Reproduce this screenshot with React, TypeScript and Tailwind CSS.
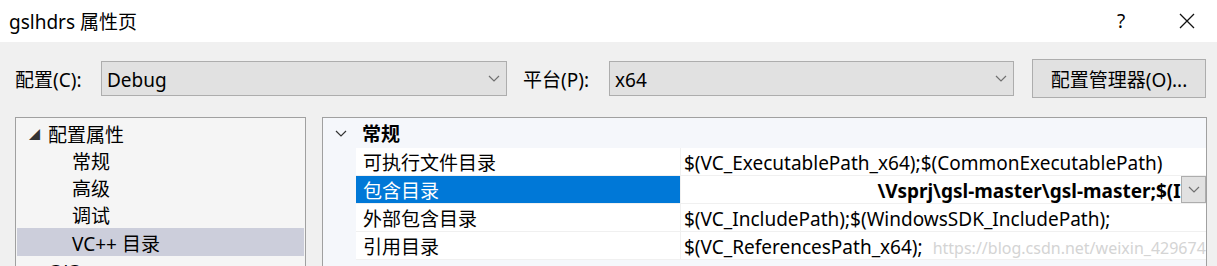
const font = { fontFamily: '"Noto Sans", "Noto Sans CJK SC", sans-serif' };

const Chevron = ({ className = "" }: { className?: string }) => (
  <svg width="12" height="7" viewBox="0 0 12 7" className={className}>
    <path d="M1 1l5 5 5-5" fill="none" stroke="currentColor" strokeWidth="1.2" />
  </svg>
);

const Combo = ({ value, width }: { value: string; width: string }) => (
  <div className={`${width} h-[35px] bg-[#e1e1e1] border border-[#adadad] flex items-center justify-between pl-[5px] pr-[6px]`}>
    <span className="text-[19px] text-black pt-[3px]">{value}</span>
    <Chevron className="text-[#707070]" />
  </div>
);

const rows = [
  { name: "可执行文件目录", value: "$(VC_ExecutablePath_x64);$(CommonExecutablePath)" },
  { name: "包含目录", value: "", selected: true },
  { name: "外部包含目录", value: "$(VC_IncludePath);$(WindowsSDK_IncludePath);" },
  { name: "引用目录", value: "$(VC_ReferencesPath_x64);", mark: true },
];

export default function App() {
  return (
    <div className="w-[1217px] h-[266px] overflow-hidden bg-[#f0f0f0] text-black" style={font}>
      <div className="h-[42px] bg-white flex items-center justify-between pl-[9px]">
        <span className="text-[19px] pt-[2px]">gslhdrs 属性页</span>
        <div className="flex items-center">
          <span className="text-[19px] w-[30px] text-center mr-[43px]">?</span>
          <svg width="16" height="16" viewBox="0 0 16 16" className="mr-[22px]">
            <path d="M1 1l14 14M15 1L1 15" stroke="#111" strokeWidth="1.3" />
          </svg>
        </div>
      </div>

      <div className="flex items-center h-[39px] mt-[17px] pl-[15px]">
        <span className="text-[19px] w-[86px] pt-[3px]">配置(C):</span>
        <Combo value="Debug" width="w-[406px]" />
        <span className="text-[19px] ml-[16px] w-[86px] pt-[3px]">平台(P):</span>
        <Combo value="x64" width="w-[405px]" />
        <div className="ml-[18px] w-[174px] h-[39px] bg-[#e1e1e1] border border-[#adadad] flex items-center justify-center text-[19px] pt-[3px]">
          配置管理器(O)...
        </div>
      </div>

      <div className="flex mt-[19px] pl-[15px] gap-[16px]">
        <div className="w-[291px] h-[160px] bg-[#f5f5f5] border border-[#a0a0a0] pt-[2px] px-[1px] text-[19px]">
          <div className="h-[27px] flex items-center pt-[4px]">
            <span className="w-[31px] pl-[12px] text-[11px] text-[#333]">◢</span>
            <span>配置属性</span>
          </div>
          {["常规", "高级", "调试"].map((t) => (
            <div key={t} className="h-[27px] flex items-center pl-[55px] pt-[4px]">{t}</div>
          ))}
          <div className="h-[28px] flex items-center pl-[55px] pt-[4px] bg-[#cccedb]">VC++ 目录</div>
          <div className="h-[27px] flex items-center pt-[6px]">
            <span className="w-[31px] pl-[12px] text-[11px] text-[#333]">▷</span>
            <span>C/C++</span>
          </div>
        </div>

        <div className="w-[885px] h-[160px] bg-[#f5f7fb] border border-[#a0a0a0] text-[19px] overflow-hidden">
          <div className="h-[30px] flex items-center">
            <span className="w-[33px] flex justify-center pl-[2px]">
              <Chevron className="text-[#333]" />
            </span>
            <span className="font-bold pt-[3px] pl-[6px]">常规</span>
          </div>
          {rows.map((r) => (
            <div key={r.name} className="h-[28px] flex ml-[33px] border-b border-[#f0f0f0]">
              <div
                className={`w-[325px] flex items-center pl-[7px] pt-[4px] border-r border-[#f0f0f0] ${
                  r.selected ? "bg-[#0078d7] text-white" : "bg-white"
                }`}
              >
                {r.name}
              </div>
              <div className="flex-1 flex items-center bg-white pl-[3px] overflow-hidden whitespace-nowrap">
                {r.selected ? (
                  <div className="flex-1 flex h-full">
                    <div className="flex-1 flex items-center justify-end overflow-hidden font-bold pt-[4px]">
                      <span className="mr-[-12px]">\Vsprj\gsl-master\gsl-master;$(In</span>
                    </div>
                    <div className="w-[25px] h-full bg-[#e1e1e1] border border-[#adadad] flex items-center justify-center">
                      <Chevron className="text-[#707070]" />
                    </div>
                  </div>
                ) : (
                  <div className="flex items-center pt-[4px]">
                    <span>{r.value}</span>
                    {r.mark && (
                      <span className="ml-[10px] text-[16px] text-[#d4d4d4]">
                        https://blog.csdn.net/weixin_42967497
                      </span>
                    )}
                  </div>
                )}
              </div>
            </div>
          ))}
        </div>
      </div>
    </div>
  );
}
